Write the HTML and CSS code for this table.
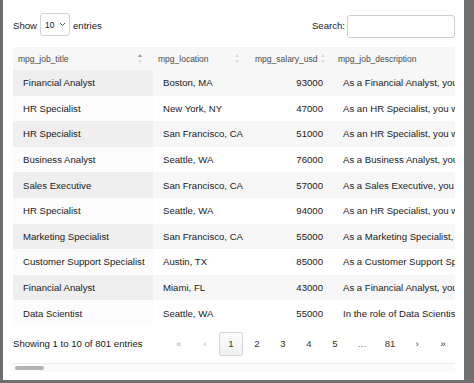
FILE: index.html
```html
<!DOCTYPE html>
<html>
  <head>
    <meta charset="utf-8" />
    <title>Jobs table</title>
    <link rel="stylesheet" href="styles.css">
  </head>
  <body>
    <div class="panel">
      <div class="top">
        <div class="length">
          Show
          <span class="select">10
            <svg width="7" height="5" viewBox="0 0 7 5"><path d="M1 1 L3.5 3.5 L6 1" fill="none" stroke="#555" stroke-width="1"/></svg>
          </span>
          entries
        </div>
        <div class="search">
          Search:
          <span class="search-input"></span>
        </div>
      </div>

      <div class="table-clip">
        <table class="jobs">
          <colgroup>
            <col class="c-title" />
            <col class="c-loc" />
            <col class="c-sal" />
            <col class="c-desc" />
          </colgroup>
          <thead>
            <tr>
              <th>mpg_job_title<span class="sort asc"></span></th>
              <th>mpg_location<span class="sort"></span></th>
              <th>mpg_salary_usd<span class="sort"></span></th>
              <th>mpg_job_description<span class="sort"></span></th>
            </tr>
          </thead>
          <tbody>
            <tr><td>Financial Analyst</td><td>Boston, MA</td><td class="num">93000</td><td>As a Financial Analyst, you will analyze financial data and prepare reports.</td></tr>
            <tr><td>HR Specialist</td><td>New York, NY</td><td class="num">47000</td><td>As an HR Specialist, you will manage recruiting and employee relations.</td></tr>
            <tr><td>HR Specialist</td><td>San Francisco, CA</td><td class="num">51000</td><td>As an HR Specialist, you will manage recruiting and employee relations.</td></tr>
            <tr><td>Business Analyst</td><td>Seattle, WA</td><td class="num">76000</td><td>As a Business Analyst, you will gather requirements from stakeholders.</td></tr>
            <tr><td>Sales Executive</td><td>San Francisco, CA</td><td class="num">57000</td><td>As a Sales Executive, you will drive new revenue and client growth.</td></tr>
            <tr><td>HR Specialist</td><td>Seattle, WA</td><td class="num">94000</td><td>As an HR Specialist, you will manage recruiting and employee relations.</td></tr>
            <tr><td>Marketing Specialist</td><td>San Francisco, CA</td><td class="num">55000</td><td>As a Marketing Specialist, you will plan and run campaigns.</td></tr>
            <tr><td>Customer Support Specialist</td><td>Austin, TX</td><td class="num">85000</td><td>As a Customer Support Specialist, you will help customers.</td></tr>
            <tr><td>Financial Analyst</td><td>Miami, FL</td><td class="num">43000</td><td>As a Financial Analyst, you will analyze financial data and prepare reports.</td></tr>
            <tr><td>Data Scientist</td><td>Seattle, WA</td><td class="num">55000</td><td>In the role of Data Scientist, you will build predictive models.</td></tr>
          </tbody>
        </table>
      </div>

      <div class="bottom">
        <div class="info">Showing 1 to 10 of 801 entries</div>
        <div class="pages">
          <span class="page muted">«</span>
          <span class="page muted">‹</span>
          <span class="page current">1</span>
          <span class="page">2</span>
          <span class="page">3</span>
          <span class="page">4</span>
          <span class="page">5</span>
          <span class="page ellipsis">…</span>
          <span class="page wide">81</span>
          <span class="page">›</span>
          <span class="page">»</span>
        </div>
      </div>

      <div class="hscroll"><div class="thumb"></div></div>
    </div>
  </body>
</html>
```

FILE: styles.css
```css
* {
  box-sizing: border-box;
  margin: 0;
  padding: 0;
}

body {
  background: #6f6f6f;
  width: 474px;
  height: 383px;
  overflow: hidden;
  font-family: 'Liberation Sans', Arial, sans-serif;
  font-size: 9.6px;
  color: #1a1a1a;
}

.panel {
  margin-left: 3px;
  width: 461px;
  height: 380px;
  background: #fff;
  padding: 13px 9px 0 10px;
  display: flex;
  flex-direction: column;
}

.top {
  display: flex;
  justify-content: space-between;
  align-items: center;
  height: 25px;
}

.length {
  display: flex;
  align-items: center;
  gap: 3px;
}

.select {
  display: flex;
  align-items: center;
  gap: 5px;
  width: 30px;
  height: 23px;
  margin-top: -2px;
  padding-left: 4px;
  border: 1px solid #d2d2d2;
  border-radius: 3px;
  font-size: 8.5px;
}

.search {
  display: flex;
  align-items: center;
  gap: 2px;
}

.search-input {
  display: block;
  width: 108px;
  height: 23px;
  margin-top: 2px;
  border: 1px solid #cfcfcf;
  border-radius: 3px;
}

.table-clip {
  margin-top: 9px;
  overflow: hidden;
  width: 442px;
}

.jobs {
  border-collapse: collapse;
  table-layout: fixed;
  width: 720px;
  font-size: 9.6px;
}

.c-title { width: 140px; }
.c-loc { width: 97px; }
.c-sal { width: 83px; }
.c-desc { width: 400px; }

.jobs th {
  position: relative;
  height: 23px;
  padding: 0 18px 0 5px;
  background: #f7f7f8;
  text-align: left;
  font-weight: normal;
  font-size: 8.5px;
  color: #4a4a4a;
  white-space: nowrap;
}

.jobs td {
  height: 25.6px;
  padding: 0 10px;
  white-space: nowrap;
  overflow: hidden;
}

.jobs td.num {
  text-align: right;
}

.jobs tbody tr:nth-child(odd) td {
  background: #f7f7f7;
}

.jobs tbody tr:nth-child(odd) td:first-child {
  background: #efefef;
}

.jobs tbody tr:nth-child(even) td:first-child {
  background: #fcfcfc;
}

.sort {
  position: absolute;
  right: 10px;
  top: 7px;
  width: 5px;
  height: 9px;
}

.sort::before,
.sort::after {
  content: '';
  position: absolute;
  left: 0;
  border-left: 2.5px solid transparent;
  border-right: 2.5px solid transparent;
}

.sort::before {
  top: 0;
  border-bottom: 3.5px solid #dcdcdc;
}

.sort::after {
  bottom: 0;
  border-top: 3.5px solid #dcdcdc;
}

.sort.asc::before {
  border-bottom-color: #9a9a9a;
}

.jobs th:nth-child(3) .sort {
  right: 7px;
}

.bottom {
  display: flex;
  justify-content: space-between;
  align-items: center;
  margin-top: 6px;
  height: 24px;
}

.pages {
  display: flex;
  gap: 2px;
}

.page {
  display: flex;
  align-items: center;
  justify-content: center;
  width: 24px;
  height: 24px;
  color: #333;
  font-size: 9.6px;
}

.page.muted {
  color: #aaa;
}

.page.ellipsis {
  width: 26px;
  color: #666;
}

.page.wide {
  width: 26px;
}

.page.current {
  border: 1px solid #d6d6d6;
  border-radius: 2px;
  background: linear-gradient(#fdfdfd, #f0f0f0);
}

.hscroll {
  margin-top: 7px;
  width: 442px;
  height: 9px;
  border-top: 1px solid #ededed;
  background: #fafafa;
  padding: 2px 0 0 2px;
}

.thumb {
  width: 29px;
  height: 4px;
  border-radius: 2px;
  background: #b4b4b4;
}
```
